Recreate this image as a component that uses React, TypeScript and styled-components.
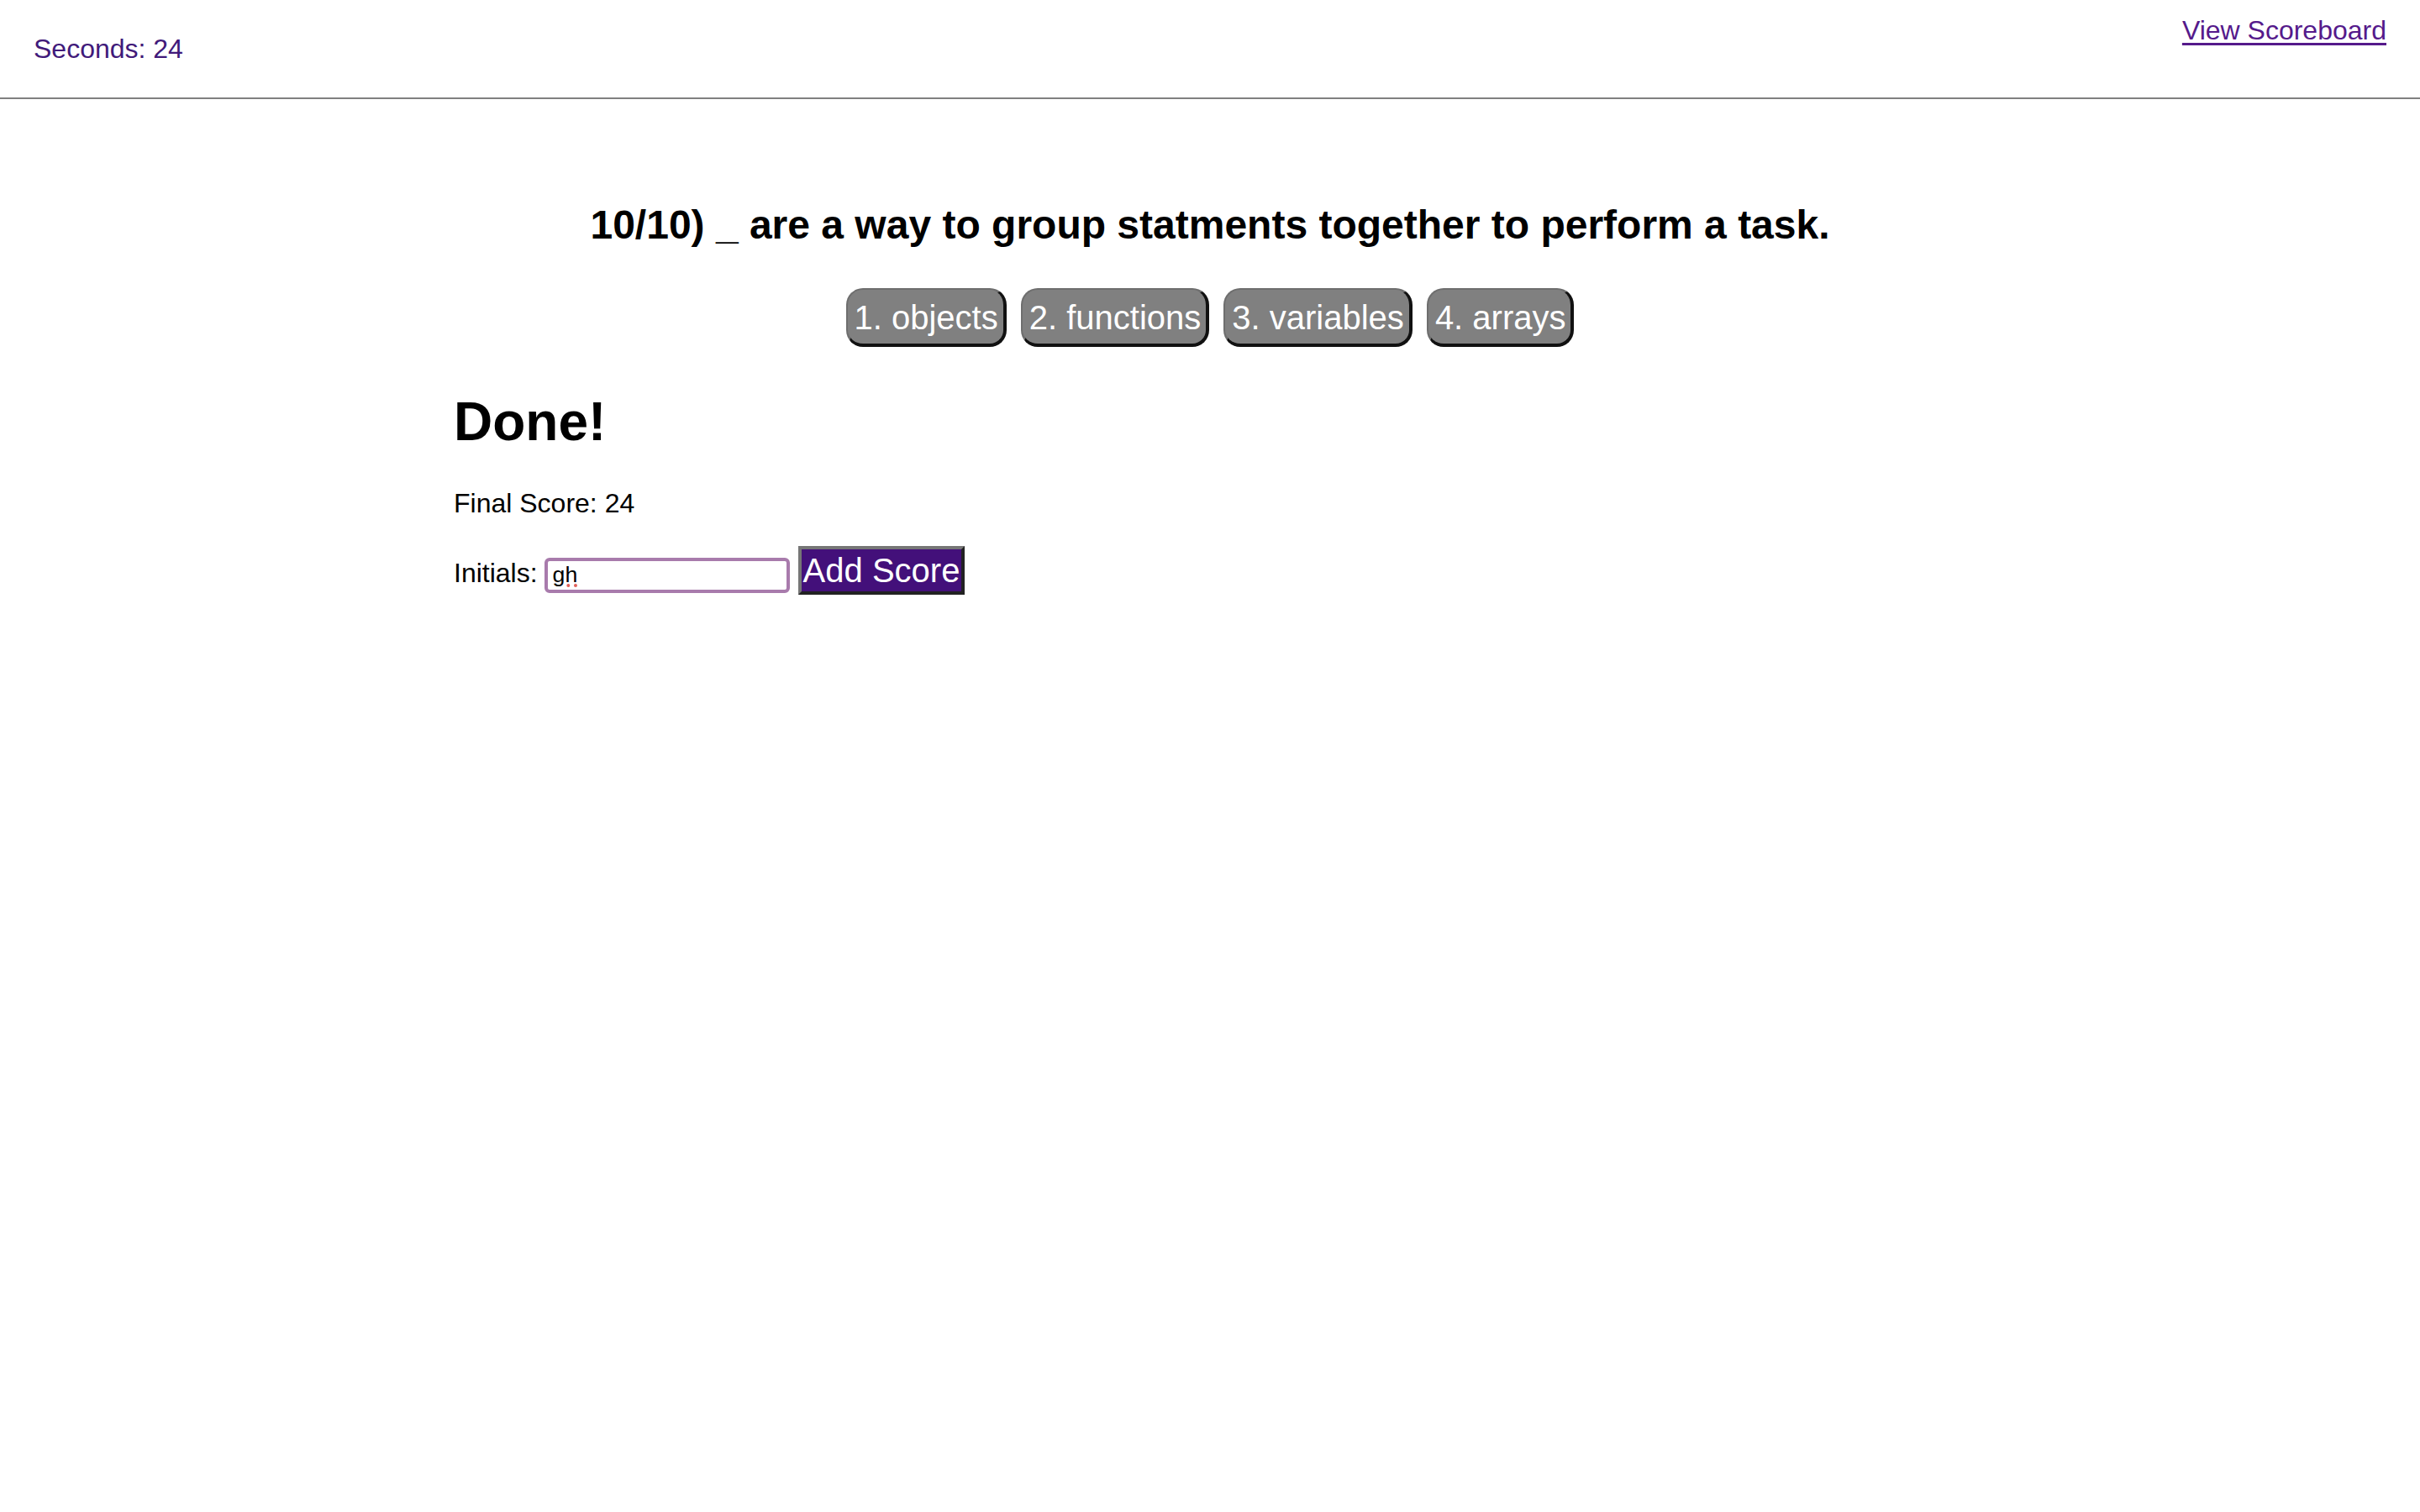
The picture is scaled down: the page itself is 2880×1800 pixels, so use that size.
import React from 'react';
import styled, { createGlobalStyle } from 'styled-components';

const GlobalStyle = createGlobalStyle`
  html, body {
    margin: 0;
    padding: 0;
    background: #ffffff;
  }
  body {
    font-family: 'Liberation Sans', Arial, Helvetica, sans-serif;
    font-size: 32px;
    color: #000;
  }
`;

const Header = styled.header`
  display: flex;
  justify-content: space-between;
  align-items: flex-start;
  height: 116px;
  padding: 0 40px;
  border-bottom: 2px solid #808080;
`;

const Timer = styled.div`
  margin-top: 40px;
  color: #411a7a;
  font-size: 32px;
`;

const ScoreLink = styled.a`
  margin-top: 18px;
  color: #551a8b;
  font-size: 32px;
  text-decoration: underline;
  text-decoration-thickness: 3px;
  text-underline-offset: 4px;
  cursor: pointer;
`;

const Main = styled.main`
  width: 1800px;
  margin: 0 auto;
`;

const Question = styled.h2`
  margin: 122px 0 48px;
  font-size: 48px;
  font-weight: bold;
  text-align: center;
`;

const Choices = styled.div`
  display: flex;
  justify-content: center;
  gap: 17px;
`;

const Choice = styled.button`
  font-family: 'Liberation Sans', Arial, sans-serif;
  font-size: 40px;
  line-height: 46px;
  color: #fff;
  background: #808080;
  border-radius: 20px;
  border-style: solid;
  border-width: 2px 4px 4px 2px;
  border-color: #6e6e6e #111 #111 #6e6e6e;
  padding: 10px 6px 8px 8px;
  cursor: pointer;
`;

const DoneTitle = styled.h1`
  margin: 52px 0 42px;
  font-size: 64px;
  font-weight: bold;
`;

const ScoreText = styled.p`
  margin: 0 0 32px;
  font-size: 32px;
`;

const Form = styled.form`
  display: flex;
  align-items: baseline;
  gap: 10px;
`;

const Label = styled.label`
  font-size: 32px;
`;

const Input = styled.input`
  box-sizing: border-box;
  width: 292px;
  height: 42px;
  margin-left: -2px;
  padding: 2px 6px;
  font-family: 'Liberation Sans', Arial, sans-serif;
  font-size: 26.67px;
  color: #000;
  border: 4px solid #a87bac;
  border-radius: 6px;
  outline: none;
  text-decoration: underline dotted #e0605a;
  text-decoration-thickness: 4px;
`;

const SubmitButton = styled.button`
  font-family: 'Liberation Sans', Arial, sans-serif;
  font-size: 40px;
  line-height: 46px;
  color: #fff;
  background: #43107a;
  border-style: solid;
  border-width: 4px;
  border-color: #767676 #222 #222 #767676;
  padding: 2px 2px;
  cursor: pointer;
`;

const choices = ['1. objects', '2. functions', '3. variables', '4. arrays'];

const App: React.FC = () => {
  return (
    <>
      <GlobalStyle />
      <Header>
        <Timer>Seconds: 24</Timer>
        <ScoreLink href="#">View Scoreboard</ScoreLink>
      </Header>
      <Main>
        <Question>10/10) _ are a way to group statments together to perform a task.</Question>
        <Choices>
          {choices.map((c) => (
            <Choice key={c}>{c}</Choice>
          ))}
        </Choices>
        <DoneTitle>Done!</DoneTitle>
        <ScoreText>Final Score: 24</ScoreText>
        <Form onSubmit={(e) => e.preventDefault()}>
          <Label htmlFor="initials">Initials:</Label>
          <Input id="initials" type="text" defaultValue="gh" />
          <SubmitButton type="submit">Add Score</SubmitButton>
        </Form>
      </Main>
    </>
  );
};

export default App;
